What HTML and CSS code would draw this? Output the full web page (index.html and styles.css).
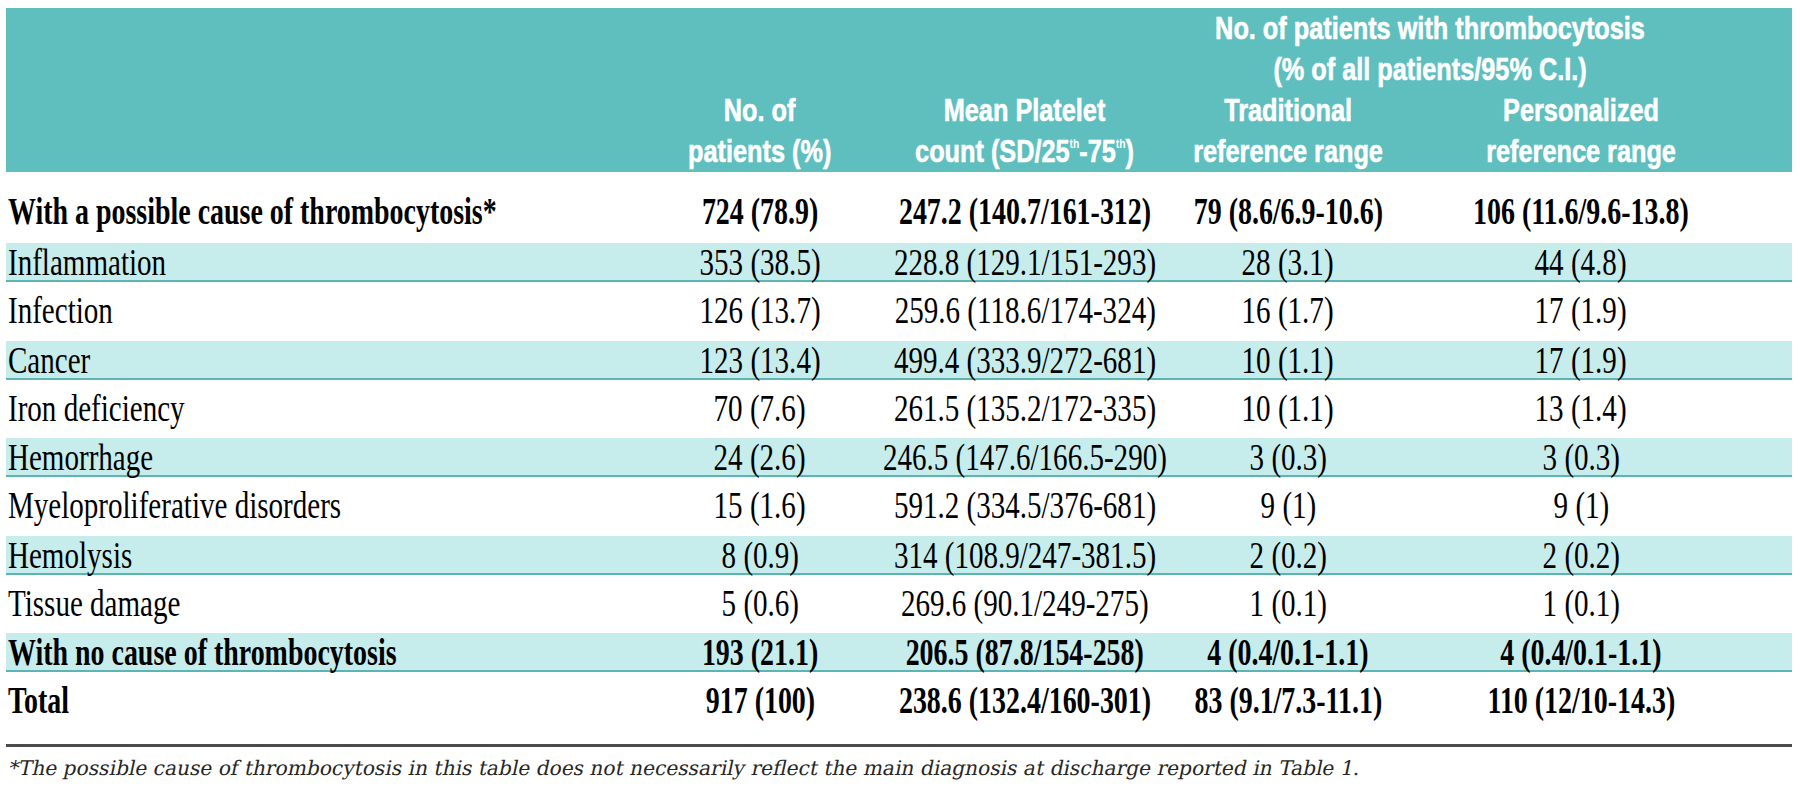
FILE: index.html
```html
<!DOCTYPE html>
<html lang="en">
<head>
<meta charset="utf-8">
<title>Table 2</title>
<link rel="stylesheet" href="styles.css">
</head>
<body>
<div class="page">
  <div class="head">
    <div class="hcell c2"><span class="sq">No. of<br>patients (%)</span></div>
    <div class="hcell c3"><span class="sq">Mean Platelet<br>count (SD/25<sup class="th">th</sup>-75<sup class="th">th</sup>)</span></div>
    <div class="hcell super"><span class="sq">No. of patients with thrombocytosis<br>(% of all patients/95% C.I.)</span></div>
    <div class="hcell c4"><span class="sq">Traditional<br>reference range</span></div>
    <div class="hcell c5"><span class="sq">Personalized<br>reference range</span></div>
  </div>

  <div class="row first bold">
    <div class="cell lab"><span class="sq">With a possible cause of thrombocytosis*</span></div>
    <div class="cell"><span class="sq">724 (78.9)</span></div>
    <div class="cell"><span class="sq">247.2 (140.7/161-312)</span></div>
    <div class="cell"><span class="sq">79 (8.6/6.9-10.6)</span></div>
    <div class="cell"><span class="sq">106 (11.6/9.6-13.8)</span></div>
  </div>
  <div class="row shade">
    <div class="cell lab"><span class="sq">Inflammation</span></div>
    <div class="cell"><span class="sq">353 (38.5)</span></div>
    <div class="cell"><span class="sq">228.8 (129.1/151-293)</span></div>
    <div class="cell"><span class="sq">28 (3.1)</span></div>
    <div class="cell"><span class="sq">44 (4.8)</span></div>
  </div>
  <div class="row">
    <div class="cell lab"><span class="sq">Infection</span></div>
    <div class="cell"><span class="sq">126 (13.7)</span></div>
    <div class="cell"><span class="sq">259.6 (118.6/174-324)</span></div>
    <div class="cell"><span class="sq">16 (1.7)</span></div>
    <div class="cell"><span class="sq">17 (1.9)</span></div>
  </div>
  <div class="row shade">
    <div class="cell lab"><span class="sq">Cancer</span></div>
    <div class="cell"><span class="sq">123 (13.4)</span></div>
    <div class="cell"><span class="sq">499.4 (333.9/272-681)</span></div>
    <div class="cell"><span class="sq">10 (1.1)</span></div>
    <div class="cell"><span class="sq">17 (1.9)</span></div>
  </div>
  <div class="row">
    <div class="cell lab"><span class="sq">Iron deficiency</span></div>
    <div class="cell"><span class="sq">70 (7.6)</span></div>
    <div class="cell"><span class="sq">261.5 (135.2/172-335)</span></div>
    <div class="cell"><span class="sq">10 (1.1)</span></div>
    <div class="cell"><span class="sq">13 (1.4)</span></div>
  </div>
  <div class="row shade">
    <div class="cell lab"><span class="sq">Hemorrhage</span></div>
    <div class="cell"><span class="sq">24 (2.6)</span></div>
    <div class="cell"><span class="sq">246.5 (147.6/166.5-290)</span></div>
    <div class="cell"><span class="sq">3 (0.3)</span></div>
    <div class="cell"><span class="sq">3 (0.3)</span></div>
  </div>
  <div class="row">
    <div class="cell lab"><span class="sq">Myeloproliferative disorders</span></div>
    <div class="cell"><span class="sq">15 (1.6)</span></div>
    <div class="cell"><span class="sq">591.2 (334.5/376-681)</span></div>
    <div class="cell"><span class="sq">9 (1)</span></div>
    <div class="cell"><span class="sq">9 (1)</span></div>
  </div>
  <div class="row shade">
    <div class="cell lab"><span class="sq">Hemolysis</span></div>
    <div class="cell"><span class="sq">8 (0.9)</span></div>
    <div class="cell"><span class="sq">314 (108.9/247-381.5)</span></div>
    <div class="cell"><span class="sq">2 (0.2)</span></div>
    <div class="cell"><span class="sq">2 (0.2)</span></div>
  </div>
  <div class="row">
    <div class="cell lab"><span class="sq">Tissue damage</span></div>
    <div class="cell"><span class="sq">5 (0.6)</span></div>
    <div class="cell"><span class="sq">269.6 (90.1/249-275)</span></div>
    <div class="cell"><span class="sq">1 (0.1)</span></div>
    <div class="cell"><span class="sq">1 (0.1)</span></div>
  </div>
  <div class="row shade bold">
    <div class="cell lab"><span class="sq">With no cause of thrombocytosis</span></div>
    <div class="cell"><span class="sq">193 (21.1)</span></div>
    <div class="cell"><span class="sq">206.5 (87.8/154-258)</span></div>
    <div class="cell"><span class="sq">4 (0.4/0.1-1.1)</span></div>
    <div class="cell"><span class="sq">4 (0.4/0.1-1.1)</span></div>
  </div>
  <div class="row last bold">
    <div class="cell lab"><span class="sq">Total</span></div>
    <div class="cell"><span class="sq">917 (100)</span></div>
    <div class="cell"><span class="sq">238.6 (132.4/160-301)</span></div>
    <div class="cell"><span class="sq">83 (9.1/7.3-11.1)</span></div>
    <div class="cell"><span class="sq">110 (12/10-14.3)</span></div>
  </div>

  <div class="rule"></div>
  <p class="note"><span class="slant">*The possible cause of thrombocytosis in this table does not necessarily reflect the main diagnosis at discharge reported in Table 1.</span></p>
</div>
</body>
</html>
```

FILE: styles.css
```css
html, body {
  margin: 0;
  padding: 0;
  background: #ffffff;
}

body {
  font-family: "Liberation Serif", "Times New Roman", serif;
  color: #000000;
  overflow: hidden;
}

.page {
  padding: 8px 8px 0 6px;
}

.head,
.row {
  display: grid;
  grid-template-columns: 622px 264px 266px 260px 326px 1fr;
}

/* ---------- header ---------- */
.head {
  grid-template-rows: 82px 82px;
  height: 164px;
  background: #5fbfbf;
  color: #ffffff;
  font-family: "Liberation Sans", Arial, sans-serif;
  font-weight: 700;
  font-size: 32px;
  line-height: 41px;
  -webkit-text-stroke: 0.6px #ffffff;
}

.hcell {
  display: flex;
  justify-content: center;
  align-items: flex-end;
}

.hcell.c2 { grid-column: 2; grid-row: 1 / 3; }
.hcell.c3 { grid-column: 3; grid-row: 1 / 3; }
.hcell.super { grid-column: 4 / 6; grid-row: 1; padding-right: 42px; }
.hcell.c4 { grid-column: 4; grid-row: 2; }
.hcell.c5 { grid-column: 5; grid-row: 2; }

.head .sq {
  transform: scaleX(0.79);
}

.th {
  font-size: 13px;
  line-height: 0;
  vertical-align: 14px;
  -webkit-text-stroke: 0;
}

/* ---------- condensed text ---------- */
.sq {
  display: inline-block;
  white-space: nowrap;
  text-align: center;
  transform: scaleX(0.785);
  transform-origin: center center;
}

/* ---------- body rows ---------- */
.row {
  box-sizing: border-box;
  height: 58.5px;
  font-size: 37px;
  line-height: 40px;
}

.row.first {
  height: 71px;
  padding-top: 9px;
}

.row.shade {
  height: 39px;
  background: #c6ecec;
  border-bottom: 2px solid #5cb5b5;
}

.row.last {
  height: 58px;
}

.bold {
  font-weight: 700;
}

.bold .sq {
  transform: scaleX(0.755);
}

.cell {
  display: flex;
  align-items: center;
  justify-content: center;
}

.cell.lab {
  justify-content: flex-start;
  padding-left: 2px;
}

.cell.lab .sq {
  text-align: left;
  transform-origin: left center;
}

/* ---------- footer ---------- */
.rule {
  height: 3px;
  margin-top: 14px;
  background: #4a4a4a;
}

.note {
  margin: 6px 0 0 0;
  font-family: "DejaVu Serif", "Liberation Serif", serif;
  font-size: 20.2px;
  line-height: 30px;
  color: #262626;
}

.slant {
  display: inline-block;
  white-space: nowrap;
  transform: skewX(-12deg);
  transform-origin: left bottom;
}
```
